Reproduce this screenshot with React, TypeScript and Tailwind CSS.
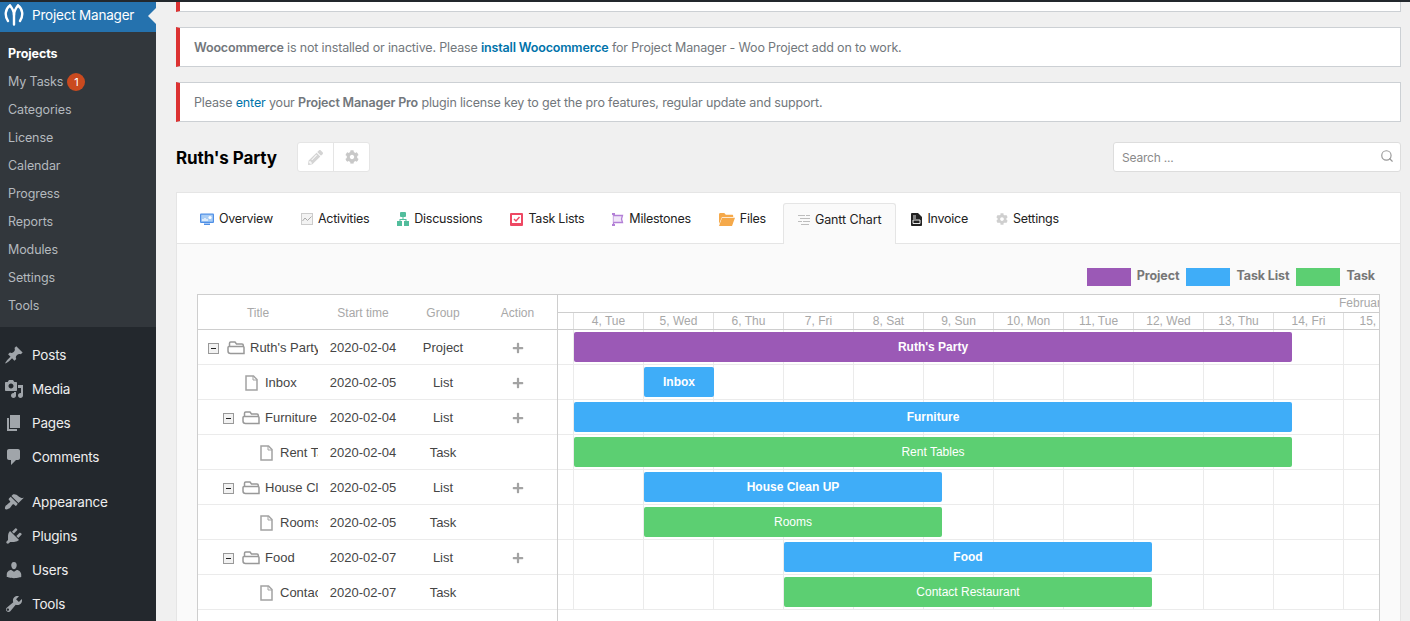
import React from "react";
import { FaPencilAlt, FaCog, FaPlus } from "react-icons/fa";
import { Search } from "lucide-react";

const dash: Record<string, string> = {
  Posts: "M10.44 3.02l1.82-1.82 6.36 6.35-1.83 1.82c-1.05-.68-2.48-.57-3.41.36l-.75.75c-.92.93-1.04 2.35-.35 3.41l-1.83 1.82-2.41-2.41-2.8 2.79c-.42.42-3.38 2.71-3.8 2.29s1.86-3.39 2.28-3.81l2.79-2.79L4.1 9.36l1.83-1.82c1.05.69 2.48.57 3.4-.36l.75-.75c.93-.92 1.05-2.35.36-3.41z",
  Media: "M13 11V4c0-.55-.45-1-1-1h-1.67L9 1H5L3.67 3H2c-.55 0-1 .45-1 1v7c0 .55.45 1 1 1h10c.55 0 1-.45 1-1zM7 4.5c1.38 0 2.5 1.12 2.5 2.5S8.38 9.5 7 9.5 4.5 8.38 4.5 7 5.62 4.5 7 4.5zM14 6h5v10.5c0 1.38-1.12 2.5-2.5 2.5S14 17.88 14 16.5s1.12-2.5 2.5-2.5c.17 0 .34.02.5.05V9h-3V6zm-4 8.05V13h2v3.5c0 1.38-1.12 2.5-2.5 2.5S7 17.88 7 16.5 8.12 14 9.5 14c.17 0 .34.02.5.05z",
  Pages: "M6 15V2h10v13H6zm-1 1h8v2H3V5h2v11z",
  Comments: "M5 2h9c1.1 0 2 .9 2 2v7c0 1.1-.9 2-2 2h-2l-5 5v-5H5c-1.1 0-2-.9-2-2V4c0-1.1.9-2 2-2z",
  Appearance: "M14.48 11.06L7.41 3.99l1.5-1.5c.5-.56 2.3-.47 3.51.32 1.21.8 1.43 1.28 2.91 2.1 1.18.64 2.45 1.26 4.45.85zm-.71.71L6.7 4.7 4.93 6.47c-.39.39-.39 1.02 0 1.41l1.06 1.06c.39.39.39 1.03 0 1.42-.6.6-1.43 1.11-2.21 1.69-.35.26-.7.53-1.01.84C1.43 13.23.5 15.8 1.1 16.9c.55 1.04 3.59.31 4.96-1.06.34-.34.59-.72.85-1.07.55-.83 1.11-1.64 1.7-2.23.39-.39 1.03-.39 1.42 0l1.06 1.06c.39.39 1.02.39 1.41 0z",
  Plugins: "M13.11 4.36L9.87 7.6 8 5.73l3.24-3.24c.35-.34 1.05-.2 1.56.32.52.51.66 1.21.31 1.55zm-8 1.77l.91-1.12 9.01 9.01-1.19.84c-.71.71-2.63 1.16-3.82 1.16H6.14L4.9 17.26c-.59.59-1.54.59-2.12 0-.59-.58-.59-1.53 0-2.12l1.24-1.24v-3.88c0-1.13.4-3.19 1.09-3.89zm7.26 3.97l3.24-3.24c.34-.35 1.04-.21 1.55.31.52.51.66 1.21.31 1.55l-3.24 3.25z",
  Users: "M10 9.25c-2.27 0-2.73-3.44-2.73-3.44C7 4.02 7.82 2 9.97 2c2.16 0 2.98 2.02 2.71 3.81 0 0-.41 3.44-2.68 3.44zm0 2.57L12.72 10c2.39 0 4.52 2.33 4.52 4.53v2.49s-3.65 1.13-7.24 1.13c-3.65 0-7.24-1.13-7.24-1.13v-2.49c0-2.25 1.94-4.48 4.47-4.48z",
  Tools: "M16.68 9.77c-1.34 1.34-3.3 1.67-4.95.99l-5.41 6.52c-.99.99-2.59.99-3.58 0s-.99-2.59 0-3.57l6.52-5.42c-.68-1.65-.35-3.61.99-4.95 1.28-1.28 3.12-1.62 4.72-1.06l-2.89 2.89 2.82 2.82 2.89-2.89c.56 1.6.22 3.44-1.11 4.67zM4.7 16.51c.46-.46.46-1.2 0-1.66-.46-.46-1.2-.46-1.66 0-.46.46-.46 1.2 0 1.66.46.46 1.2.46 1.66 0z",
};

function MainItem({ label }: { label: string }) {
  return (
    <div className="flex h-[34px] items-center">
      <svg viewBox="0 0 20 20" className="ml-[4px] h-5 w-5 fill-[#a0a5aa]">
        <path d={dash[label]} />
      </svg>
      <span className="ml-[8px] text-[13.5px] tracking-[-0.2px] text-[#eeeeee]">{label}</span>
    </div>
  );
}

function Sidebar() {
  const subs = ["Categories", "License", "Calendar", "Progress", "Reports", "Modules", "Settings", "Tools"];
  return (
    <aside className="w-[156px] shrink-0 bg-[#23282d] font-[Inter,sans-serif]">
      <div className="relative flex h-[30px] items-center bg-[#2572ae] pb-[4px] text-white">
        <svg viewBox="0 0 20 22" className="ml-[4px] h-[22px] w-5" fill="none" stroke="#fff" strokeWidth="2.4" strokeLinecap="round">
          <path d="M4 17C.5 12 1 5 6 1.500" />
          <path d="M16 17c3.500-5 3-12-2-15.500" />
          <path d="M10 20.500V11C10 7 8 4 6 1.500" />
          <path d="M10 11c0-4 2-7 4-9.500" />
        </svg>
        <span className="ml-[8px] text-[13.5px] tracking-[-0.2px]">Project Manager</span>
        <div className="absolute right-0 top-[6px] h-0 w-0 border-y-[8px] border-r-[8px] border-y-transparent border-r-[#f0f0f0]" />
      </div>
      <div className="h-[295px] bg-[#32373c] pt-[8px] pl-[8px] text-[12.5px] leading-[28px] tracking-[-0.1px] text-[#b4b9be]">
        <div className="font-bold text-white">Projects</div>
        <div className="flex items-center">
          My Tasks
          <span className="ml-[4px] flex h-[18px] w-[18px] items-center justify-center rounded-full bg-[#ca4a1f] text-[11px] text-white">1</span>
        </div>
        {subs.map((s) => (
          <div key={s}>{s}</div>
        ))}
      </div>
      <div className="pt-[11px]">
        {["Posts", "Media", "Pages", "Comments"].map((l) => (
          <MainItem key={l} label={l} />
        ))}
      </div>
      <div className="pt-[11px]">
        {["Appearance", "Plugins", "Users", "Tools"].map((l) => (
          <MainItem key={l} label={l} />
        ))}
      </div>
    </aside>
  );
}

const tabIcons: Record<string, React.ReactNode> = {
  Overview: (
    <svg viewBox="0 0 14 14" className="h-[14px] w-[14px]">
      <rect x="0" y="1.500" width="14" height="9.500" rx="1" fill="#4f8fe6" />
      <rect x="1.200" y="2.700" width="11.600" height="7" fill="#a9cdf5" />
      <path d="M3 9V7M5 9V6M7 9V7" stroke="#fff" strokeWidth="1.200" />
      <circle cx="10" cy="5.500" r="1.600" fill="#fff" />
      <rect x="4" y="11.500" width="6" height="1.500" fill="#4f8fe6" />
    </svg>
  ),
  Activities: (
    <svg viewBox="0 0 12 12" className="h-3 w-3" fill="none">
      <rect x=".5" y=".5" width="11" height="11" stroke="#cccccc" fill="#f3f3f3" />
      <path d="M1.500 8l2.500-3 2.500 2.500L10.500 3.500" stroke="#aaaaaa" />
    </svg>
  ),
  Discussions: (
    <svg viewBox="0 0 12 14" className="h-[14px] w-3" fill="#52bd9c">
      <rect x="3" y="0" width="6" height="5" rx="1" />
      <rect x="0" y="9" width="5" height="5" />
      <rect x="7" y="9" width="5" height="5" />
      <path d="M5.500 5h1v2h3v2h-1V8h-5v1h-1V7h3z" />
    </svg>
  ),
  "Task Lists": (
    <svg viewBox="0 0 13 13" className="h-[13px] w-[13px]">
      <rect width="13" height="13" rx="1" fill="#ee4863" />
      <rect x="2" y="2" width="9" height="8" fill="#fff" />
      <path d="M4 6l2 2 3.500-4" stroke="#ee4863" strokeWidth="1.400" fill="none" />
    </svg>
  ),
  Milestones: (
    <svg viewBox="0 0 12 13" className="h-[13px] w-3" fill="none" stroke="#b27fd6" strokeWidth="1.300">
      <path d="M1.500 0v13" />
      <path d="M1.500 2.500h9l-1 3.500 1 3.500h-9" fill="#f0e6f8" />
      <rect x="0" y="0" width="3" height="2" fill="#b27fd6" stroke="none" />
      <rect x="0" y="11" width="3" height="2" fill="#b27fd6" stroke="none" />
    </svg>
  ),
  Files: (
    <svg viewBox="0 0 16 13" className="h-[13px] w-4">
      <path d="M0 1.500C0 .7.500 0 1.300 0h4l1.500 1.700h6.400c.6 0 1 .5 1 1V4H3L0 11z" fill="#f5a94a" />
      <path d="M3 4.800h13L13 13H0z" fill="#f5a94a" />
    </svg>
  ),
  "Gantt Chart": (
    <svg viewBox="0 0 12 12" className="h-3 w-3" stroke="#bdbdbd" strokeWidth="1">
      <path d="M0 1.500h7M8 1.500h4M2 4.500h10M0 7.500h4M5 7.500h7M3 10.500h8" />
    </svg>
  ),
  Invoice: (
    <svg viewBox="0 0 11 13" className="h-[13px] w-[11px]">
      <path d="M0 1c0-.5.500-1 1-1h6l4 4v8c0 .5-.5 1-1 1H1c-.5 0-1-.5-1-1z" fill="#222222" />
      <path d="M2 3h3M2 5h3M2 7h7v3.500H2z" stroke="#fff" strokeWidth=".9" fill="none" />
    </svg>
  ),
  Settings: <FaCog className="h-3 w-3 text-[#cfcfcf]" />,
};

function Tabs() {
  const items = ["Overview", "Activities", "Discussions", "Task Lists", "Milestones", "Files"];
  const Label = ({ name }: { name: string }) => (
    <>
      <span className="flex w-auto items-center">{tabIcons[name]}</span>
      <span className="ml-[5px]">{name}</span>
    </>
  );
  return (
    <div className="flex h-[51px] items-end border-b border-[#e5e5e5] bg-white pl-[9px] font-[Inter,sans-serif] text-[12.5px] tracking-[-0.25px] text-[#222222]">
      {items.map((t) => (
        <div key={t} className="flex h-[37px] items-center px-[14px] pb-[11px]">
          <Label name={t} />
        </div>
      ))}
      <div className="relative -mb-px ml-[3px] flex h-[41px] items-center rounded-t-[3px] border border-b-0 border-[#e5e5e5] bg-[#fafafa] px-[14px] pb-[8px] tracking-[-0.1px]">
        <Label name="Gantt Chart" />
      </div>
      <div className="ml-px flex h-[37px] items-center px-[14px] pb-[11px]">
        <Label name="Invoice" />
      </div>
      <div className="flex h-[37px] items-center px-[14px] pb-[11px]">
        <Label name="Settings" />
      </div>
    </div>
  );
}

type Row = {
  title: string;
  level: number;
  folder: boolean;
  date: string;
  group: string;
  plus: boolean;
  start: number;
  width: number;
  color: string;
  bold: boolean;
  bar: string;
};

const PURPLE = "bg-[#9b59b6]";
const BLUE = "bg-[#3fadf8]";
const GREEN = "bg-[#5ccf72]";

const rows: Row[] = [
  { title: "Ruth's Party", level: 0, folder: true, date: "2020-02-04", group: "Project", plus: true, start: 16, width: 718, color: PURPLE, bold: true, bar: "Ruth's Party" },
  { title: "Inbox", level: 1, folder: false, date: "2020-02-05", group: "List", plus: true, start: 86, width: 70, color: BLUE, bold: true, bar: "Inbox" },
  { title: "Furniture", level: 1, folder: true, date: "2020-02-04", group: "List", plus: true, start: 16, width: 718, color: BLUE, bold: true, bar: "Furniture" },
  { title: "Rent Tables", level: 2, folder: false, date: "2020-02-04", group: "Task", plus: false, start: 16, width: 718, color: GREEN, bold: false, bar: "Rent Tables" },
  { title: "House Clean UP", level: 1, folder: true, date: "2020-02-05", group: "List", plus: true, start: 86, width: 298, color: BLUE, bold: true, bar: "House Clean UP" },
  { title: "Rooms", level: 2, folder: false, date: "2020-02-05", group: "Task", plus: false, start: 86, width: 298, color: GREEN, bold: false, bar: "Rooms" },
  { title: "Food", level: 1, folder: true, date: "2020-02-07", group: "List", plus: true, start: 226, width: 368, color: BLUE, bold: true, bar: "Food" },
  { title: "Contact Restaurant", level: 2, folder: false, date: "2020-02-07", group: "Task", plus: false, start: 226, width: 368, color: GREEN, bold: false, bar: "Contact Restaurant" },
];

const days = ["4, Tue", "5, Wed", "6, Thu", "7, Fri", "8, Sat", "9, Sun", "10, Mon", "11, Tue", "12, Wed", "13, Thu", "14, Fri", "15, Sat"];

function Toggle() {
  return (
    <span className="flex h-[11px] w-[11px] shrink-0 items-center justify-center border border-[#999999] bg-[#f2f2f2]">
      <span className="h-px w-[5px] bg-[#222222]" />
    </span>
  );
}

function FolderIcon() {
  return (
    <svg viewBox="0 0 18 14" className="ml-[8px] h-[14px] w-[18px] shrink-0" fill="none" stroke="#999999" strokeWidth="1.500">
      <path d="M2.500 6V2.200C2.500 1.500 3 1 3.700 1H8l1.500 2H15c.8 0 1.300.5 1.300 1.200V6" />
      <path d="M1 6.500C1 6 1.500 5.500 2 5.500h14c.5 0 1 .5 1 1v6H3.500C2 12.500 1 11.500 1 10z" />
    </svg>
  );
}

function FileIcon() {
  return (
    <svg viewBox="0 0 13 16" className="h-4 w-[13px] shrink-0" fill="none" stroke="#a3a3a3" strokeWidth="1.500">
      <path d="M1 1h7.500L12 4.500V15H1z" />
      <path d="M8 1v4h4" strokeWidth="1" />
    </svg>
  );
}

function TableRow({ r }: { r: Row }) {
  const indent = ["pl-[10px]", "pl-[25px]", "pl-[40px]"];
  const fileIndent = ["pl-[32px]", "pl-[47px]", "pl-[62px]"];
  return (
    <div className="flex h-[35px] items-center border-b border-[#ebebeb] pt-[2px] text-[13px] text-[#454545]">
      <div className={`flex w-[120px] items-center overflow-hidden whitespace-nowrap ${r.folder ? indent[r.level] : fileIndent[r.level]}`}>
        {r.folder ? <Toggle /> : <FileIcon />}
        {r.folder && <FolderIcon />}
        <span className={r.folder ? "ml-[5px]" : "ml-[7px]"}>{r.title}</span>
      </div>
      <div className="w-[90px] text-center">{r.date}</div>
      <div className="w-[70px] text-center">{r.group}</div>
      <div className="flex w-[79px] justify-center">
        {r.plus && <FaPlus className="h-3 w-3 text-[#a3a3a3]" />}
      </div>
    </div>
  );
}

function ChartRow({ r }: { r: Row }) {
  return (
    <div className="relative flex h-[35px] border-b border-[#ebebeb]">
      <div className="w-[15px] shrink-0" />
      {days.map((d) => (
        <div key={d} className="w-[70px] shrink-0 border-l border-[#ebebeb]" />
      ))}
      <div
        className={`absolute top-[2px] flex h-[30px] items-center justify-center rounded-[2px] text-[12px] text-white ${r.color} ${r.bold ? "font-bold" : ""}`}
        style={{ left: r.start, width: r.width }}
      >
        {r.bar}
      </div>
    </div>
  );
}

function Gantt() {
  return (
    <div className="flex h-[340px] overflow-hidden border border-b-0 border-[#cecece] bg-white font-['Liberation_Sans',Arial,sans-serif]">
      <div className="w-[360px] shrink-0 border-r border-[#cecece]">
        <div className="flex h-[35px] items-center border-b border-[#cecece] pt-[1px] text-[12px] text-[#a8a8a8]">
          <div className="w-[120px] text-center">Title</div>
          <div className="w-[90px] text-center">Start time</div>
          <div className="w-[70px] text-center">Group</div>
          <div className="w-[79px] text-center">Action</div>
        </div>
        {rows.map((r) => (
          <TableRow key={r.title} r={r} />
        ))}
      </div>
      <div className="min-w-0 flex-1 overflow-hidden">
        <div className="h-[35px] w-[900px] border-b border-[#cecece] text-[12px] text-[#a8a8a8]">
          <div className="h-[18px] border-b border-[#cecece] pl-[781px] leading-[17px] whitespace-nowrap">February, 2020</div>
          <div className="flex h-[16px] leading-[16px]">
            <div className="w-[15px] shrink-0" />
            {days.map((d) => (
              <div key={d} className="w-[70px] shrink-0 border-l border-[#e0e0e0] text-center whitespace-nowrap">{d}</div>
            ))}
          </div>
        </div>
        <div className="w-[900px]">
          {rows.map((r) => (
            <ChartRow key={r.title} r={r} />
          ))}
        </div>
      </div>
    </div>
  );
}

function Notice({ children }: { children: React.ReactNode }) {
  return (
    <div className="mt-[15px] flex h-10 items-center border border-l-4 border-[#ccd0d4] border-l-[#dc3232] bg-white pt-[2px] pl-[14px] text-[12.5px] tracking-[-0.16px] text-[#72777c]">
      <div>{children}</div>
    </div>
  );
}

function Legend({ color, label, gap }: { color: string; label: string; gap: string }) {
  return (
    <div className={`flex items-start ${gap}`}>
      <span className={`h-[18px] w-11 ${color}`} />
      <span className="ml-[6px] text-[12.5px] leading-[15px] font-bold tracking-[-0.1px] text-[#777777]">{label}</span>
    </div>
  );
}

export default function App() {
  return (
    <div className="h-[621px] w-[1410px] overflow-hidden bg-[#f0f0f0]">
      <div className="h-[2px] bg-[#23282d]" />
      <div className="flex h-[619px]">
        <Sidebar />
        <main className="min-w-0 flex-1 overflow-hidden pr-[9px] pl-[20px] font-[Inter,sans-serif]">
          <div className="h-[10px] border-r border-b border-l-4 border-[#ccd0d4] border-l-[#dc3232] bg-white" />
          <Notice>
            <b className="font-semibold">Woocommerce</b> is not installed or inactive. Please{" "}
            <b className="font-semibold text-[#0073aa]">install Woocommerce</b> for Project Manager - Woo Project add on to work.
          </Notice>
          <Notice>
            Please <span className="text-[#0073aa]">enter</span> your <b className="font-semibold">Project Manager Pro</b> plugin license key to get the pro features, regular update and support.
          </Notice>
          <div className="mt-5 flex h-[30px] items-center">
            <h1 className="w-[101px] pt-[4px] text-[17px] font-bold tracking-[-0.1px] whitespace-nowrap text-black">Ruth's Party</h1>
            <div className="ml-[20px] flex h-[30px] w-[73px] rounded-[3px] border border-[#e5e5e5] bg-white">
              <div className="flex w-9 items-center justify-center border-r border-[#e5e5e5]">
                <FaPencilAlt className="h-[15px] w-[15px] text-[#d4d4d4]" />
              </div>
              <div className="flex flex-1 items-center justify-center">
                <FaCog className="h-[14px] w-[14px] text-[#c8c8c8]" />
              </div>
            </div>
            <div className="ml-auto flex h-[30px] w-[288px] items-center justify-between rounded-[3px] border border-[#dddddd] bg-white pr-[6px] pl-2 text-[12px] tracking-[-0.2px] text-[#8a8a8a]">
              <span className="pt-[2px]">Search ...</span>
              <Search className="mb-[3px] h-[14px] w-[14px] text-[#999999]" strokeWidth={2} />
            </div>
          </div>
          <section className="mt-5 border border-b-0 border-[#e5e5e5] bg-[#fafafa]">
            <Tabs />
            <div className="flex items-start justify-end pt-[24px] pr-[5px] pb-[8px]">
              <Legend color={PURPLE} label="Project" gap="" />
              <Legend color={BLUE} label="Task List" gap="ml-[7px]" />
              <Legend color={GREEN} label="Task" gap="ml-[7px]" />
              <div className="w-[20px]" />
            </div>
            <div className="px-5">
              <Gantt />
            </div>
          </section>
        </main>
      </div>
    </div>
  );
}
